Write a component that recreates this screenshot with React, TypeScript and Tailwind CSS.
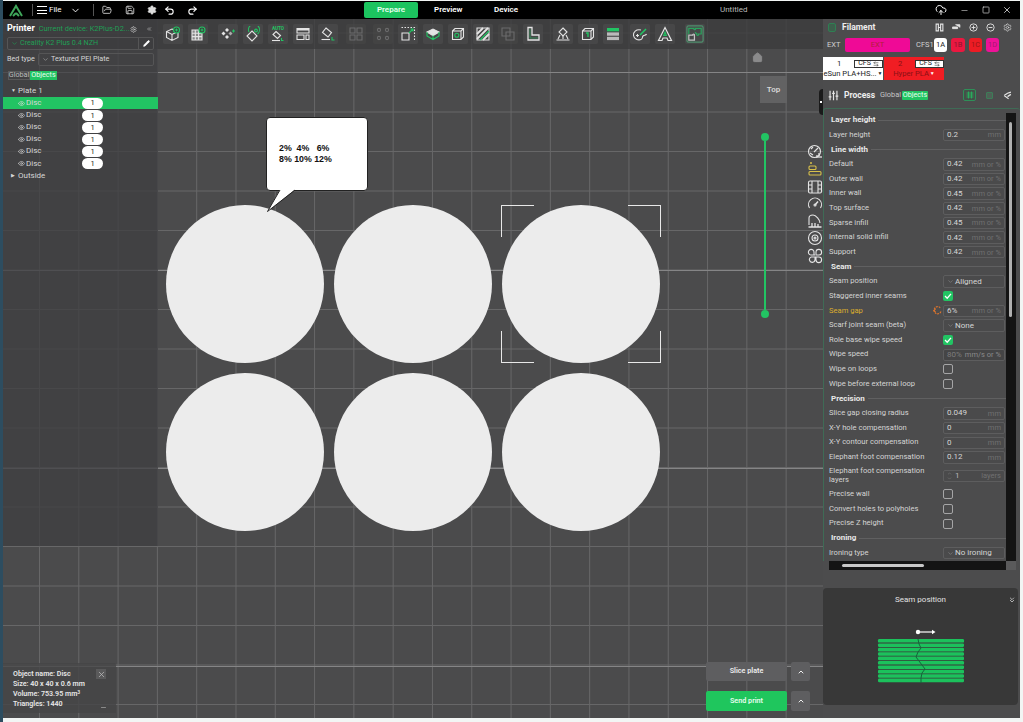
import type { ReactNode } from "react";
import {
  ArrowLeftRight,
  ChevronDown,
  ChevronsDown,
  ChevronsLeft,
  ChevronUp,
  CloudUpload,
  Eye,
  FolderOpen,
  Home,
  Minus,
  Pencil,
  Redo2,
  Save,
  Settings,
  Square,
  Undo2,
  X,
} from "lucide-react";

const W = "#e4e4e4";
const G = "#22c463";
const D = "#6b6b6c";

function Ico({ children, size = 16 }: { children: ReactNode; size?: number }) {
  return (
    <svg width={size} height={size} viewBox="0 0 16 16" fill="none" stroke={W} strokeWidth={1.1}>
      {children}
    </svg>
  );
}

const toolIcons: { node: ReactNode; ml?: number; dim?: boolean }[] = [
  {
    node: (
      <Ico>
        <path d="M7 3 L13 5.5 V11.5 L7 14.5 L1.5 11.5 V5.5 Z M1.5 5.5 L7 8.5 L13 5.5 M7 8.5 V14.5" />
        <circle cx="11.5" cy="4" r="3" fill="#3c3c3d" stroke={G} />
        <path d="M10 4 H13 M11.5 2.5 V5.5" stroke={G} />
      </Ico>
    ),
  },
  {
    node: (
      <Ico>
        <path d="M2 4 H12 V14 H2 Z M2 7.3 H12 M2 10.6 H12 M5.3 4 V14 M8.6 4 V14" fill="#8a8a8a" />
        <circle cx="12" cy="4" r="3" fill="#3c3c3d" stroke={G} />
        <path d="M10.5 4 H13.5 M12 2.5 V5.5" stroke={G} />
      </Ico>
    ),
  },
  {
    node: (
      <Ico>
        <path d="M7 2 L9 4 L7 6 L5 4 Z M3.5 5.5 L5.5 7.5 L3.5 9.5 L1.5 7.5 Z M7 9 L9 11 L7 13 L5 11 Z" fill={W} stroke="none" />
        <path d="M10.5 5.5 L12.5 7.5 L10.5 9.5 L8.5 7.5 Z" fill="#aaa" stroke="none" />
        <path d="M12 5 H15 M13.5 3.5 V6.5" stroke={G} />
      </Ico>
    ),
    ml: 5,
  },
  {
    node: (
      <Ico>
        <path d="M7 5 L12 10 L7 15 L2 10 Z" />
        <path d="M4 6 A5.5 5.5 0 1 1 12.5 8" stroke={G} />
        <circle cx="11" cy="4.5" r="1.4" stroke={G} />
      </Ico>
    ),
  },
  {
    node: (
      <Ico>
        <text x="8" y="4" textAnchor="middle" fontSize="4.6" fontWeight="700" fill={G} stroke="none" fontFamily="Roboto, sans-serif">
          AUTO
        </text>
        <path d="M6 5.5 L10.5 9.5 L7.5 12.5 L3 8.5 Z" />
        <path d="M2 14.5 H10" />
        <path d="M11.5 12 V14.5 L13.5 14.5" stroke={G} />
      </Ico>
    ),
  },
  {
    node: (
      <Ico>
        <path d="M2 2.5 H14 V7 H2 Z M2 9 H9 V13.5 H2 Z M11 9 H14 V13.5 H11 Z" />
        <path d="M2 2.5 H14 V4.5 H2 Z" fill={W} stroke="none" />
      </Ico>
    ),
  },
  {
    node: (
      <Ico>
        <path d="M6 2 L11.5 6.5 L8 11 L2.5 6.5 Z" />
        <path d="M1.5 13.5 H10" />
        <path d="M12 11 V14 H14.5" stroke={G} />
      </Ico>
    ),
  },
  {
    node: (
      <Ico>
        <path d="M2 2 H7 V7 H2 Z M9 2 H14 V7 H9 Z M2 9 H7 V14 H2 Z M9 9 H14 V14 H9 Z" stroke={D} />
      </Ico>
    ),
    ml: 3,
    dim: true,
  },
  {
    node: (
      <Ico>
        <circle cx="4" cy="4" r="1.6" stroke={D} />
        <circle cx="12" cy="4" r="1.6" stroke={D} />
        <circle cx="4" cy="12" r="1.6" stroke={D} />
        <circle cx="12" cy="12" r="1.6" stroke={D} />
      </Ico>
    ),
    ml: 2,
    dim: true,
  },
  {
    node: (
      <Ico>
        <path d="M1.5 1.5 H14.5 V14.5" strokeDasharray="1.5 1.5" />
        <path d="M2 7 H9 V14 H2 Z" />
        <path d="M9 7 L13 3 M10.5 3 H13 V5.5" stroke={G} />
      </Ico>
    ),
  },
  {
    node: (
      <Ico>
        <path d="M2 6 L8 3 L14 6 L8 9.5 Z" fill={W} />
        <path d="M2 6 V10 L8 13.5 L14 10 V6 M8 9.5 V13.5" stroke={G} />
      </Ico>
    ),
  },
  {
    node: (
      <Ico>
        <path d="M2.5 5 L5 2.5 H13.5 V11 L11 13.5 H2.5 Z M2.5 5 H11 V13.5 M11 5 L13.5 2.5" />
        <circle cx="6.8" cy="9.2" r="2" stroke={G} />
      </Ico>
    ),
  },
  {
    node: (
      <Ico>
        <path d="M2 2 H14 V14 H2 Z" />
        <path d="M2 8 L8 2 M2 13 L13 2 M8 14 L14 8" strokeWidth={1.8} />
        <path d="M5 14 L14 5" stroke={G} strokeWidth={1.2} />
      </Ico>
    ),
  },
  {
    node: (
      <Ico>
        <path d="M2 2 H10 V10 H2 Z M6 6 H14 V14 H6 Z" stroke={D} />
      </Ico>
    ),
    dim: true,
  },
  {
    node: (
      <Ico>
        <path d="M3 1.5 H7 V9 H14 V14 H3 Z" strokeWidth={1.3} />
        <path d="M5 3 V12 H13" stroke={G} strokeWidth={0.5} />
      </Ico>
    ),
  },
  {
    node: (
      <Ico>
        <path d="M8 2 L12 6 L8 10 L4 6 Z" />
        <path d="M5 9 L3 13 M11 9 L13 13 M8 10 V13 M1.5 14 H14.5" />
      </Ico>
    ),
    ml: 5,
  },
  {
    node: (
      <Ico>
        <path d="M2.5 5 L5 2.5 H13.5 V11 L11 13.5 H2.5 Z M2.5 5 H11 V13.5 M11 5 L13.5 2.5" />
        <path d="M6 7 L8 7 L8 11" stroke={G} strokeWidth={1.4} />
      </Ico>
    ),
  },
  {
    node: (
      <Ico>
        <rect x="2" y="2" width="12" height="3.3" fill={G} stroke="none" />
        <rect x="2" y="6.4" width="12" height="3.3" fill="#bbb" stroke="none" />
        <rect x="2" y="10.8" width="12" height="3.3" fill="#bbb" stroke="none" />
      </Ico>
    ),
  },
  {
    node: (
      <Ico>
        <path d="M9 4 C4 3 1 6 1.5 9.5 C2 13 6 14.5 9 13.5 C11 12.8 10 11 11 10 C12.5 9 14 9.5 14.5 8" />
        <path d="M8 9 L14 3" stroke={G} strokeWidth={1.6} />
        <path d="M4 9.5 H7 M5.5 8 V11" />
      </Ico>
    ),
    ml: 2,
  },
  {
    node: (
      <Ico>
        <path d="M8 1.5 L14.5 14.5 H11 L10 12 H6 L5 14.5 H1.5 Z" strokeWidth={1.2} />
        <path d="M8 6 L9.3 9.5 H6.7 Z" stroke={G} />
      </Ico>
    ),
  },
  {
    node: (
      <Ico size={18}>
        <rect x="0.8" y="0.8" width="14.4" height="14.4" rx="1.5" stroke="#4f8f6c" />
        <path d="M2.5 8 V3 H7 C6.5 4.5 9 4.5 8.5 3 H13.5 V8 H11 C12 9.5 9 10 9.5 8 L8 6.5" stroke="#2aa35c" />
        <path d="M2.5 9 H6 C5.5 7.8 8 7.8 7.5 9 V13.5 H2.5 Z" fill="none" stroke="#c4c4c4" />
      </Ico>
    ),
    ml: 5,
  },
];

const sideIcons: ReactNode[] = [
  <Ico key="a">
    <circle cx="7.5" cy="7.5" r="6" />
    <path d="M4 5 L6 3 M7 8 L11 4 M3 9 L6 11" />
    <path d="M10 14 V11 M12 14 V9 M14 14 V12" strokeWidth={1.3} />
  </Ico>,
  <Ico key="b">
    <g stroke="#d8c04a">
      <path d="M3 2 H5" strokeWidth={1.5} />
      <rect x="2" y="5" width="7" height="3.5" rx="1" />
      <rect x="2" y="10.5" width="12" height="3.5" rx="1" />
    </g>
  </Ico>,
  <Ico key="c">
    <rect x="1.5" y="2" width="13" height="12" rx="1.5" />
    <path d="M5 2 V14 M11 2 V14 M1.5 6 H5 M1.5 10 H5 M11 6 H14.5 M11 10 H14.5" />
  </Ico>,
  <Ico key="d">
    <path d="M2.5 12 A6.5 6.5 0 1 1 13.5 12" />
    <path d="M8 9 L11 5.5" strokeWidth={1.5} />
    <circle cx="8" cy="9" r="1" />
  </Ico>,
  <Ico key="e">
    <path d="M2 12 V5 C2 3 4 2 6 2 C9 2 13 7 13 10" />
    <path d="M1.5 14 H14.5 M5 14 V10 M8 14 V10 M11 14 V11" strokeWidth={1.3} />
  </Ico>,
  <Ico key="f">
    <circle cx="8" cy="8" r="6.5" />
    <circle cx="8" cy="8" r="3" />
    <circle cx="8" cy="8" r="1" />
  </Ico>,
  <Ico key="g">
    <path d="M8 7 H4.5 A2.8 2.8 0 1 1 7 4.2 V7 Z M9 7 V4.2 A2.8 2.8 0 1 1 11.8 7 Z M8 9 V11.8 A2.8 2.8 0 1 1 4.2 9 Z M9 9 H11.8 A2.8 2.8 0 1 1 9 11.8 Z" />
  </Ico>,
];

type Row =
  | { t: "s"; l: string }
  | { t: "i"; l: string; v: string; u: string; gold?: boolean; dim?: boolean }
  | { t: "d"; l: string; v: string }
  | { t: "c"; l: string; on?: boolean }
  | { t: "n"; l: string; v: string; u: string };

const rows: Row[] = [
  { t: "s", l: "Layer height" },
  { t: "i", l: "Layer height", v: "0.2", u: "mm" },
  { t: "s", l: "Line width" },
  { t: "i", l: "Default", v: "0.42", u: "mm or %" },
  { t: "i", l: "Outer wall", v: "0.42", u: "mm or %" },
  { t: "i", l: "Inner wall", v: "0.45", u: "mm or %" },
  { t: "i", l: "Top surface", v: "0.42", u: "mm or %" },
  { t: "i", l: "Sparse infill", v: "0.45", u: "mm or %" },
  { t: "i", l: "Internal solid infill", v: "0.42", u: "mm or %" },
  { t: "i", l: "Support", v: "0.42", u: "mm or %" },
  { t: "s", l: "Seam" },
  { t: "d", l: "Seam position", v: "Aligned" },
  { t: "c", l: "Staggered inner seams", on: true },
  { t: "i", l: "Seam gap", v: "6%", u: "mm or %", gold: true },
  { t: "d", l: "Scarf joint seam (beta)", v: "None" },
  { t: "c", l: "Role base wipe speed", on: true },
  { t: "i", l: "Wipe speed", v: "80%", u: "mm/s or %", dim: true },
  { t: "c", l: "Wipe on loops" },
  { t: "c", l: "Wipe before external loop" },
  { t: "s", l: "Precision" },
  { t: "i", l: "Slice gap closing radius", v: "0.049", u: "mm" },
  { t: "i", l: "X-Y hole compensation", v: "0", u: "mm" },
  { t: "i", l: "X-Y contour compensation", v: "0", u: "mm" },
  { t: "i", l: "Elephant foot compensation", v: "0.12", u: "mm" },
  { t: "n", l: "Elephant foot compensation layers", v: "1", u: "layers" },
  { t: "c", l: "Precise wall" },
  { t: "c", l: "Convert holes to polyholes" },
  { t: "c", l: "Precise Z height" },
  { t: "s", l: "Ironing" },
  { t: "d", l: "Ironing type", v: "No ironing" },
];

function Field({ children, dim }: { children: ReactNode; dim?: boolean }) {
  return (
    <div
      className={`flex h-[12.5px] w-[62px] items-center whitespace-nowrap rounded-[2px] border border-[#5d5d5e] pl-[3px] pr-[3px] ${
        dim ? "bg-[#454546]" : "bg-[#4a4a4b]"
      }`}
    >
      {children}
    </div>
  );
}

function SettingRow({ row }: { row: Row }) {
  if (row.t === "s") {
    return (
      <div className="flex h-[14.67px] items-center gap-[3px] pl-[7px] font-bold text-[#e8e8e8]">
        <span className="whitespace-nowrap">{row.l}</span>
        <div className="h-px flex-1 bg-[#606061]" />
      </div>
    );
  }
  const multi = row.t === "n";
  const gold = row.t === "i" && row.gold;
  return (
    <div className={`flex items-center pl-[5px] ${multi ? "h-[22.3px]" : "h-[14.67px]"}`}>
      <div className={`w-[114px] shrink-0 text-[7.6px] leading-[8.7px] ${gold ? "text-[#dcae2e]" : "text-[#d4d4d4]"} ${multi ? "pr-[10px]" : "whitespace-nowrap"}`}>
        {row.l}
      </div>
      {row.t === "i" && (
        <div className="relative">
          {row.gold && (
            <svg className="absolute left-[-10px] top-[1.5px]" width="9" height="9" viewBox="0 0 10 10" fill="none" stroke="#e2762c" strokeWidth={1.2}>
              <path d="M8 2 A4 4 0 1 0 9 5.5" strokeDasharray="2 1" />
              <path d="M3 3 L1 5 L3 7" />
            </svg>
          )}
          <Field dim={row.dim}>
            <span className={row.dim ? "text-[#7d7d7e]" : "text-[#d6d6d6]"}>{row.v}</span>
            <span className={`ml-auto text-[7.5px] ${row.dim ? "text-[#8a8a8b]" : "text-[#707071]"}`}>{row.u}</span>
          </Field>
        </div>
      )}
      {row.t === "d" && (
        <Field>
          <ChevronDown size={7} color="#8a8a8b" />
          <span className="ml-[1px] text-[#d6d6d6]">{row.v}</span>
        </Field>
      )}
      {row.t === "c" &&
        (row.on ? (
          <div className="flex h-[10px] w-[10px] items-center justify-center rounded-[2px] bg-[#22c463]">
            <svg width="8" height="8" viewBox="0 0 8 8" fill="none" stroke="#fff" strokeWidth={1.3}>
              <path d="M1 4 L3.2 6.2 L7 1.8" />
            </svg>
          </div>
        ) : (
          <div className="h-[10px] w-[10px] rounded-[2px] border border-[#a5a5a6]" />
        ))}
      {row.t === "n" && (
        <Field>
          <div className="flex flex-col">
            <ChevronUp size={5} color="#8a8a8b" />
            <ChevronDown size={5} color="#8a8a8b" />
          </div>
          <span className="ml-[3px] text-[#b8b8b8]">{row.v}</span>
          <span className="ml-auto text-[7.5px] text-[#707071]">{row.u}</span>
        </Field>
      )}
    </div>
  );
}

function SeamPicture() {
  const bars = [0, 1, 2, 3, 4, 5, 6, 7, 8, 9];
  return (
    <svg width="88" height="56" viewBox="0 0 88 56" fill="none">
      <circle cx="41" cy="5" r="2.2" fill="#fff" />
      <path d="M43 5 H57" stroke="#fff" strokeWidth={1.2} />
      <path d="M55 2.8 L58.5 5 L55 7.2 Z" fill="#fff" />
      {bars.map((b) => (
        <rect key={b} x="1" y={12 + b * 4.4} width="86" height="3.6" rx="1.2" fill="#1cc15c" />
      ))}
      <path
        d="M41 12 L42 17 L44 21 L41 25 L39 30 L42 34 L45 38 L48 42 L45 46 L44 51 L44 56"
        stroke="#14663a"
        strokeWidth={1}
      />
    </svg>
  );
}

function LeftPanel() {
  return (
    <div className="absolute left-0 top-0 h-[527px] w-[155px] bg-[#3e3e40]/75 text-[8px] text-[#d6d6d6]">
      <div className="flex h-[18px] items-center pl-[4px] pr-[6px] pt-[2px]">
        <span className="text-[9px] font-bold text-white">Printer</span>
        <span className="ml-[4px] whitespace-nowrap text-[7.4px] text-[#1f9f55]">Current device: K2Plus-D2...</span>
        <Settings size={9} className="ml-auto mr-[9px]" color="#cfcfcf" />
        <ChevronsLeft size={8} color="#cfcfcf" />
      </div>
      <div className="mx-[4px] flex h-[13px] items-center rounded-[2px] border border-[#555556]">
        <ChevronDown size={7} color="#1f9f55" className="ml-[3px]" />
        <span className="ml-[2px] text-[7.2px] text-[#1f9f55]">Creality K2 Plus 0.4 NZH</span>
        <div className="ml-auto flex h-full w-[15px] items-center justify-center border-l border-[#555556]">
          <Pencil size={7} color="#fff" fill="#fff" />
        </div>
      </div>
      <div className="mx-[4px] mt-[3px] flex h-[13px] items-center text-[7.2px]">
        <span className="w-[31px] whitespace-nowrap">Bed type</span>
        <div className="flex h-full flex-1 items-center rounded-[2px] border border-[#555556]">
          <ChevronDown size={7} color="#aaa" className="ml-[3px]" />
          <span className="ml-[2px]">Textured PEI Plate</span>
        </div>
      </div>
      <div className="ml-[5px] mt-[5px] flex h-[9px] items-center text-[7.2px]">
        <span className="flex h-full w-[22px] items-center justify-center border border-[#5a5a5b] text-[#bbb]">Global</span>
        <span className="flex h-full w-[27px] items-center justify-center bg-[#22c463] text-[#e8fff0]">Objects</span>
      </div>
      <div className="mt-[5px]">
        <div className="flex h-[12px] items-center pl-[8px] text-[#d6d6d6]">
          <span className="w-[7px] text-[5px]">▼</span>Plate 1
        </div>
        {[0, 1, 2, 3, 4, 5].map((i) => (
          <div key={i} className={`flex h-[12.1px] items-center pl-[15px] ${i === 0 ? "bg-[#22c463]" : ""}`}>
            <Eye size={7} color="#dcdcdc" />
            <span className="ml-[1px] w-[56px]">Disc</span>
            <span className="flex h-[11px] w-[21px] items-center justify-center rounded-full bg-white text-[7.5px] text-[#222]">
              1
            </span>
          </div>
        ))}
        <div className="flex h-[12px] items-center pl-[8px]">
          <span className="w-[7px] text-[5px]">▶</span>Outside
        </div>
      </div>
    </div>
  );
}

function Canvas() {
  return (
    <div className="relative flex min-w-0 flex-1 flex-col bg-[#4b4b4c] bg-[image:linear-gradient(to_bottom,#858586_1px,transparent_1px),linear-gradient(to_right,#676768_1px,transparent_1px),linear-gradient(to_bottom,#676768_1px,transparent_1px)] bg-[size:100%_198px,39.3px_100%,100%_39.5px] bg-[position:0_53px,36px_0,0_13.5px]">
      <div className="flex h-[30px] shrink-0 items-center gap-[5px] bg-[#3a3a3b]/75 pl-[160px]">
        {toolIcons.map((t, i) => (
          <div
            key={i}
            style={{ marginLeft: t.ml ?? 0 }}
            className={`flex h-[20px] w-[20px] items-center justify-center rounded-[2px] ${t.dim ? "bg-[#4a4a4b]/40" : "bg-[#4a4a4b]/80"}`}
          >
            {t.node}
          </div>
        ))}
      </div>

      <LeftPanel />

      <div className="absolute left-[163px] top-[186px] grid grid-cols-[158px_158px_158px] gap-[10px]">
        {[0, 1, 2, 3, 4, 5].map((i) => (
          <div key={i} className="relative h-[158px] rounded-full bg-[#ececec]">
            {i === 2 && (
              <>
                <div className="absolute left-[-1px] top-0 h-[32px] w-[33px] rounded-tl-[1px] border-l border-t border-[#e8e8e8]" />
                <div className="absolute right-[-1px] top-0 h-[32px] w-[33px] border-r border-t border-[#e8e8e8]" />
                <div className="absolute bottom-0 left-[-1px] h-[32px] w-[33px] border-b border-l border-[#e8e8e8]" />
                <div className="absolute bottom-0 right-[-1px] h-[32px] w-[33px] border-b border-r border-[#e8e8e8]" />
              </>
            )}
          </div>
        ))}
      </div>

      {/* note on the plate */}
      <div className="absolute left-[263px] top-[98px] h-[74px] w-[102px] rounded-[4px] border border-[#222] bg-white pl-[12px] pt-[25px] font-['Liberation_Sans',sans-serif] text-[8.8px] font-bold leading-[11px] text-[#111]">
        <div className="whitespace-pre">{"2%  4%   6%"}</div>
        <div className="whitespace-pre">{"8% 10% 12%"}</div>
        <svg className="absolute left-[-1px] top-[71px]" width="32" height="24" viewBox="0 0 32 24">
          <path d="M14 0.5 L1.5 22.5 L29 0.5 Z" fill="#fff" />
          <path d="M14 1 L1.5 22.5 L29 1" fill="none" stroke="#222" strokeWidth={1} />
        </svg>
      </div>

      <Home size={11} color="#8a8a8b" fill="#8a8a8b" className="absolute left-[749px] top-[33px]" />
      <div className="absolute left-[757px] top-[57px] flex h-[27px] w-[27px] items-center justify-center bg-[#626263] text-[8px] font-semibold text-[#d8d8d8]">
        Top
      </div>

      {/* layer slider */}
      <div className="absolute left-[758px] top-[114px] flex h-[185px] w-[8px] flex-col items-center justify-between">
        <div className="h-[8px] w-[8px] rounded-full bg-[#22c463]" />
        <div className="w-[2px] flex-1 bg-[#22c463]" />
        <div className="h-[8px] w-[8px] rounded-full bg-[#22c463]" />
      </div>

      <div className="absolute left-[804px] top-[125px] flex w-[16px] flex-col gap-[1.3px]">
        {sideIcons}
      </div>

      <div className="absolute bottom-[5px] left-0 h-[50px] w-[113px] rounded-tr-[2px] bg-[#454546]/80 pl-[10px] pt-[6px] text-[7.1px] font-semibold leading-[10px] text-[#e8e8e8]">
        <div>Object name: Disc</div>
        <div>Size: 40 x 40 x 0.6 mm</div>
        <div>
          Volume: 753.95 mm<sup className="text-[5px]">3</sup>
        </div>
        <div>Triangles: 1440</div>
        <div className="absolute right-[10px] top-[6px] flex h-[10px] w-[10px] items-center justify-center bg-[#5a5a5b]">
          <X size={9} color="#bbb" />
        </div>
        <Minus size={7} color="#bbb" className="absolute bottom-[2px] right-[9px]" />
      </div>

      <div className="absolute bottom-[7px] left-[703px] flex flex-col gap-[10px] text-[7.2px] font-semibold">
        <div className="flex gap-[4px]">
          <div className="flex h-[19px] w-[81px] items-center justify-center rounded-[2px] bg-[#5e5e60] text-[#eee]">Slice plate</div>
          <div className="flex h-[19px] w-[19px] items-center justify-center rounded-[2px] bg-[#5e5e60]">
            <ChevronUp size={8} color="#eee" strokeWidth={3} />
          </div>
        </div>
        <div className="flex gap-[4px]">
          <div className="flex h-[20px] w-[81px] items-center justify-center rounded-[2px] bg-[#1fc65d] text-[#e8fff0]">Send print</div>
          <div className="flex h-[20px] w-[19px] items-center justify-center rounded-[2px] bg-[#5e5e60]">
            <ChevronUp size={8} color="#eee" strokeWidth={3} />
          </div>
        </div>
      </div>
    </div>
  );
}

function CfsTag() {
  return (
    <span className="flex h-[8px] w-[29px] items-center justify-center gap-[2px] border border-[#333] bg-white text-[7px] leading-none text-[#222]">
      CFS <ArrowLeftRight size={6} color="#222" />
    </span>
  );
}

function RightPanel() {
  return (
    <div className="relative flex w-[197px] shrink-0 flex-col bg-[#4c4c4d] text-[8px] text-[#d0d0d0]">
      <div className="flex h-[19px] items-center pb-[2px] pl-[5px] pr-[8px]">
        <div className="h-[9px] w-[8px] rounded-[2px] border border-[#2f7f53] bg-[#3d5f4c]" />
        <span className="ml-[6px] text-[8.5px] font-bold text-[#eee]">Filament</span>
        <div className="ml-auto flex items-center gap-[8px]">
          <Ico size={9}>
            <path d="M2 2 H6 V14 H2 Z M10 2 H14 V14 H10 Z M6 8 H10" strokeWidth={2} />
          </Ico>
          <Ico size={9}>
            <path d="M1 7 H10 V10 H1 Z M6 3 H14 V8" fill={W} strokeWidth={1.5} />
          </Ico>
          <Ico size={9}>
            <circle cx="8" cy="8" r="6.5" strokeWidth={1.6} />
            <path d="M4.5 8 H11.5 M8 4.5 V11.5" strokeWidth={1.6} />
          </Ico>
          <Ico size={9}>
            <circle cx="8" cy="8" r="6.5" strokeWidth={1.6} />
            <path d="M4.5 8 H11.5" strokeWidth={1.6} />
          </Ico>
          <Settings size={9} color="#d0d0d0" />
        </div>
      </div>
      <div className="flex h-[14px] items-center pl-[4px] text-[7.5px]">
        <span className="w-[18px]">EXT</span>
        <span className="flex h-[14px] w-[65px] items-center justify-center rounded-[2px] bg-[#ef0a96] text-[#b0203a]">EXT</span>
        <span className="ml-[6px] w-[18px]">CFS1</span>
        <span className="flex h-[14px] w-[13px] items-center justify-center rounded-[3px] bg-white text-[#222]">1A</span>
        <span className="ml-[4px] flex h-[14px] w-[14px] items-center justify-center rounded-[3px] bg-[#ea1840] text-[#8c1530]">1B</span>
        <span className="ml-[4px] flex h-[14px] w-[13px] items-center justify-center rounded-[3px] bg-[#ec1c24] text-[#9a1418]">1C</span>
        <span className="ml-[4px] flex h-[14px] w-[13px] items-center justify-center rounded-[3px] bg-[#ee1298] text-[#a51870]">1D</span>
      </div>
      <div className="mt-[5px] flex h-[23px] text-[7.6px]">
        <div className="flex w-[60px] flex-col items-center bg-white text-[#222]">
          <div className="flex h-[11px] w-full items-center pl-[14px] pt-[2px]">
            <span className="w-[17px]">1</span>
            <CfsTag />
          </div>
          <div className="flex h-[12px] items-center whitespace-nowrap">
            eSun PLA+HS... <span className="ml-[1px] text-[5px]">▼</span>
          </div>
        </div>
        <div className="ml-[1px] flex w-[60px] flex-col items-center bg-[#f01d23] text-[#8a1015]">
          <div className="flex h-[11px] w-full items-center pl-[14px] pt-[2px]">
            <span className="w-[17px]">2</span>
            <CfsTag />
          </div>
          <div className="flex h-[12px] items-center whitespace-nowrap">
            Hyper PLA <span className="ml-[1px] text-[5px] text-white">▼</span>
          </div>
        </div>
      </div>
      <div className="flex h-[28px] items-center pl-[5px] pr-[8px] pt-[2px]">
        <Ico size={11}>
          <path d="M3 1 V15 M8 1 V15 M13 1 V15 M1 10 H5 M6 5 H10 M11 9 H15" strokeWidth={1.7} />
        </Ico>
        <span className="ml-[5px] w-[31px] text-[8.5px] font-bold text-[#eee]">Process</span>
        <span className="ml-[5px] w-[19px] text-[7.4px] text-[#c4c4c4]">Global</span>
        <span className="ml-[3px] flex h-[9px] w-[26px] items-center justify-center rounded-[1px] bg-[#22c463] text-[7.2px] text-[#e8fff0]">Objects</span>
        <div className="ml-auto flex items-center gap-[10px]">
          <div className="flex h-[12px] w-[13px] items-center justify-center rounded-[2px] border border-[#2f8f58] bg-[#445049]">
            <Ico size={8}>
              <path d="M1 4 H15 M1 8 H15 M1 12 H15 M5 1 V15 M11 1 V15" stroke={G} strokeWidth={1.4} />
            </Ico>
          </div>
          <div className="h-[7px] w-[7px] rounded-[1px] border border-[#3c7d58] bg-[#4f6156]" />
          <Ico size={9}>
            <path d="M2 8 L8 4 L14 2 M2 8 L10 14 M14 6 L8 10" strokeWidth={2.2} />
          </Ico>
        </div>
      </div>

      <div className="flex h-[453px] rounded-t-[3px] border-l border-t border-[#3f6b56] pt-[4px]">
        <div className="w-[182px] overflow-hidden">
          {rows.map((r, i) => (
            <SettingRow key={i} row={r} />
          ))}
        </div>
        <div className="w-[10px] bg-[#141414] pl-[3px] pt-[9px]">
          <div className="h-[195px] w-[2.5px] rounded-full bg-[#b0b0b0]" />
        </div>
      </div>
      <div className="flex h-[9px] pl-[6px]">
        <div className="w-[177px] bg-[#141414] pl-[13px] pt-[3px]">
          <div className="h-[2.5px] w-[82px] rounded-full bg-[#c8c8c8]" />
        </div>
        <div className="w-[10px] bg-[#5a5a5b]" />
      </div>

      <div className="mt-[18px] flex h-[117px] w-[195px] flex-col items-center rounded-[4px] bg-[#383838] pt-[7px] text-[8px] text-[#e2e2e2]">
        <div className="relative flex h-[10px] w-full items-center justify-center">
          Seam position
          <ChevronsDown size={8} color="#eee" className="absolute right-[2px]" />
        </div>
        <div className="ml-[1px] mt-[22px]">
          <SeamPicture />
        </div>
      </div>

      {/* collapse tab on the panel edge */}
      <div className="absolute left-[-4px] top-[70px] flex h-[26px] w-[4px] items-center justify-center rounded-l-full bg-[#1a1a1a]">
        <div className="h-[2px] w-[2px] bg-white" />
      </div>
    </div>
  );
}

export default function App() {
  return (
    <div className="h-[722px] w-[1023px] overflow-hidden bg-[#f2f5f4] font-['Roboto',sans-serif] text-[8px]">
      <div className="flex h-[722px]">
        <div className="h-full w-[3px] shrink-0 bg-[#2d4d60]" />
        <div className="mt-[1px] flex h-[717px] w-[1017px] flex-col">
          {/* title bar */}
          <div className="relative flex h-[18px] shrink-0 items-center bg-black text-white">
            <svg className="ml-[6px]" width="14" height="13" viewBox="0 0 14 13" fill="none" stroke="#3fa65a" strokeWidth={2}>
              <path d="M1 12 L7 2 L13 12 M7 9 L4 12 M7 9 L10 12" />
            </svg>
            <div className="ml-[9px] h-[12px] w-px bg-[#555]" />
            <div className="ml-[4px] flex w-[10px] flex-col gap-[2.5px]">
              <div className="h-px bg-white" />
              <div className="h-px bg-white" />
              <div className="h-px bg-white" />
            </div>
            <span className="ml-[2px] w-[12px] text-[8px]">File</span>
            <ChevronDown size={11} className="ml-[9px]" />
            <div className="ml-[12px] h-[12px] w-px bg-[#555]" />
            <FolderOpen size={10} className="ml-[8px]" color="#ddd" />
            <Save size={10} className="ml-[13px]" color="#ddd" />
            <Settings size={10} className="ml-[12px]" fill="#ddd" color="#ddd" />
            <Undo2 size={11} className="ml-[7px]" strokeWidth={2.4} />
            <Redo2 size={11} className="ml-[12px]" strokeWidth={2.4} />

            <div className="ml-[166px] flex h-[16px] w-[54px] items-center justify-center rounded-[2px] bg-[#1cc45f] text-[8px] font-semibold text-[#e8fff0]">
              Prepare
            </div>
            <span className="ml-[16px] w-[28px] text-center font-semibold">Preview</span>
            <span className="ml-[31px] w-[26px] text-center font-semibold">Device</span>
            <span className="ml-[201px] text-[#bbb]">Untitled</span>

            <div className="ml-auto flex items-center">
              <CloudUpload size={12} />
              <Minus size={9} className="ml-[13px]" color="#aaa" />
              <Square size={8} className="ml-[13px]" color="#ddd" />
              <X size={10} className="ml-[12px] mr-[8px]" color="#ddd" />
            </div>
          </div>

          <div className="flex min-h-0 flex-1">
            <Canvas />
            <RightPanel />
          </div>
        </div>
      </div>
    </div>
  );
}
